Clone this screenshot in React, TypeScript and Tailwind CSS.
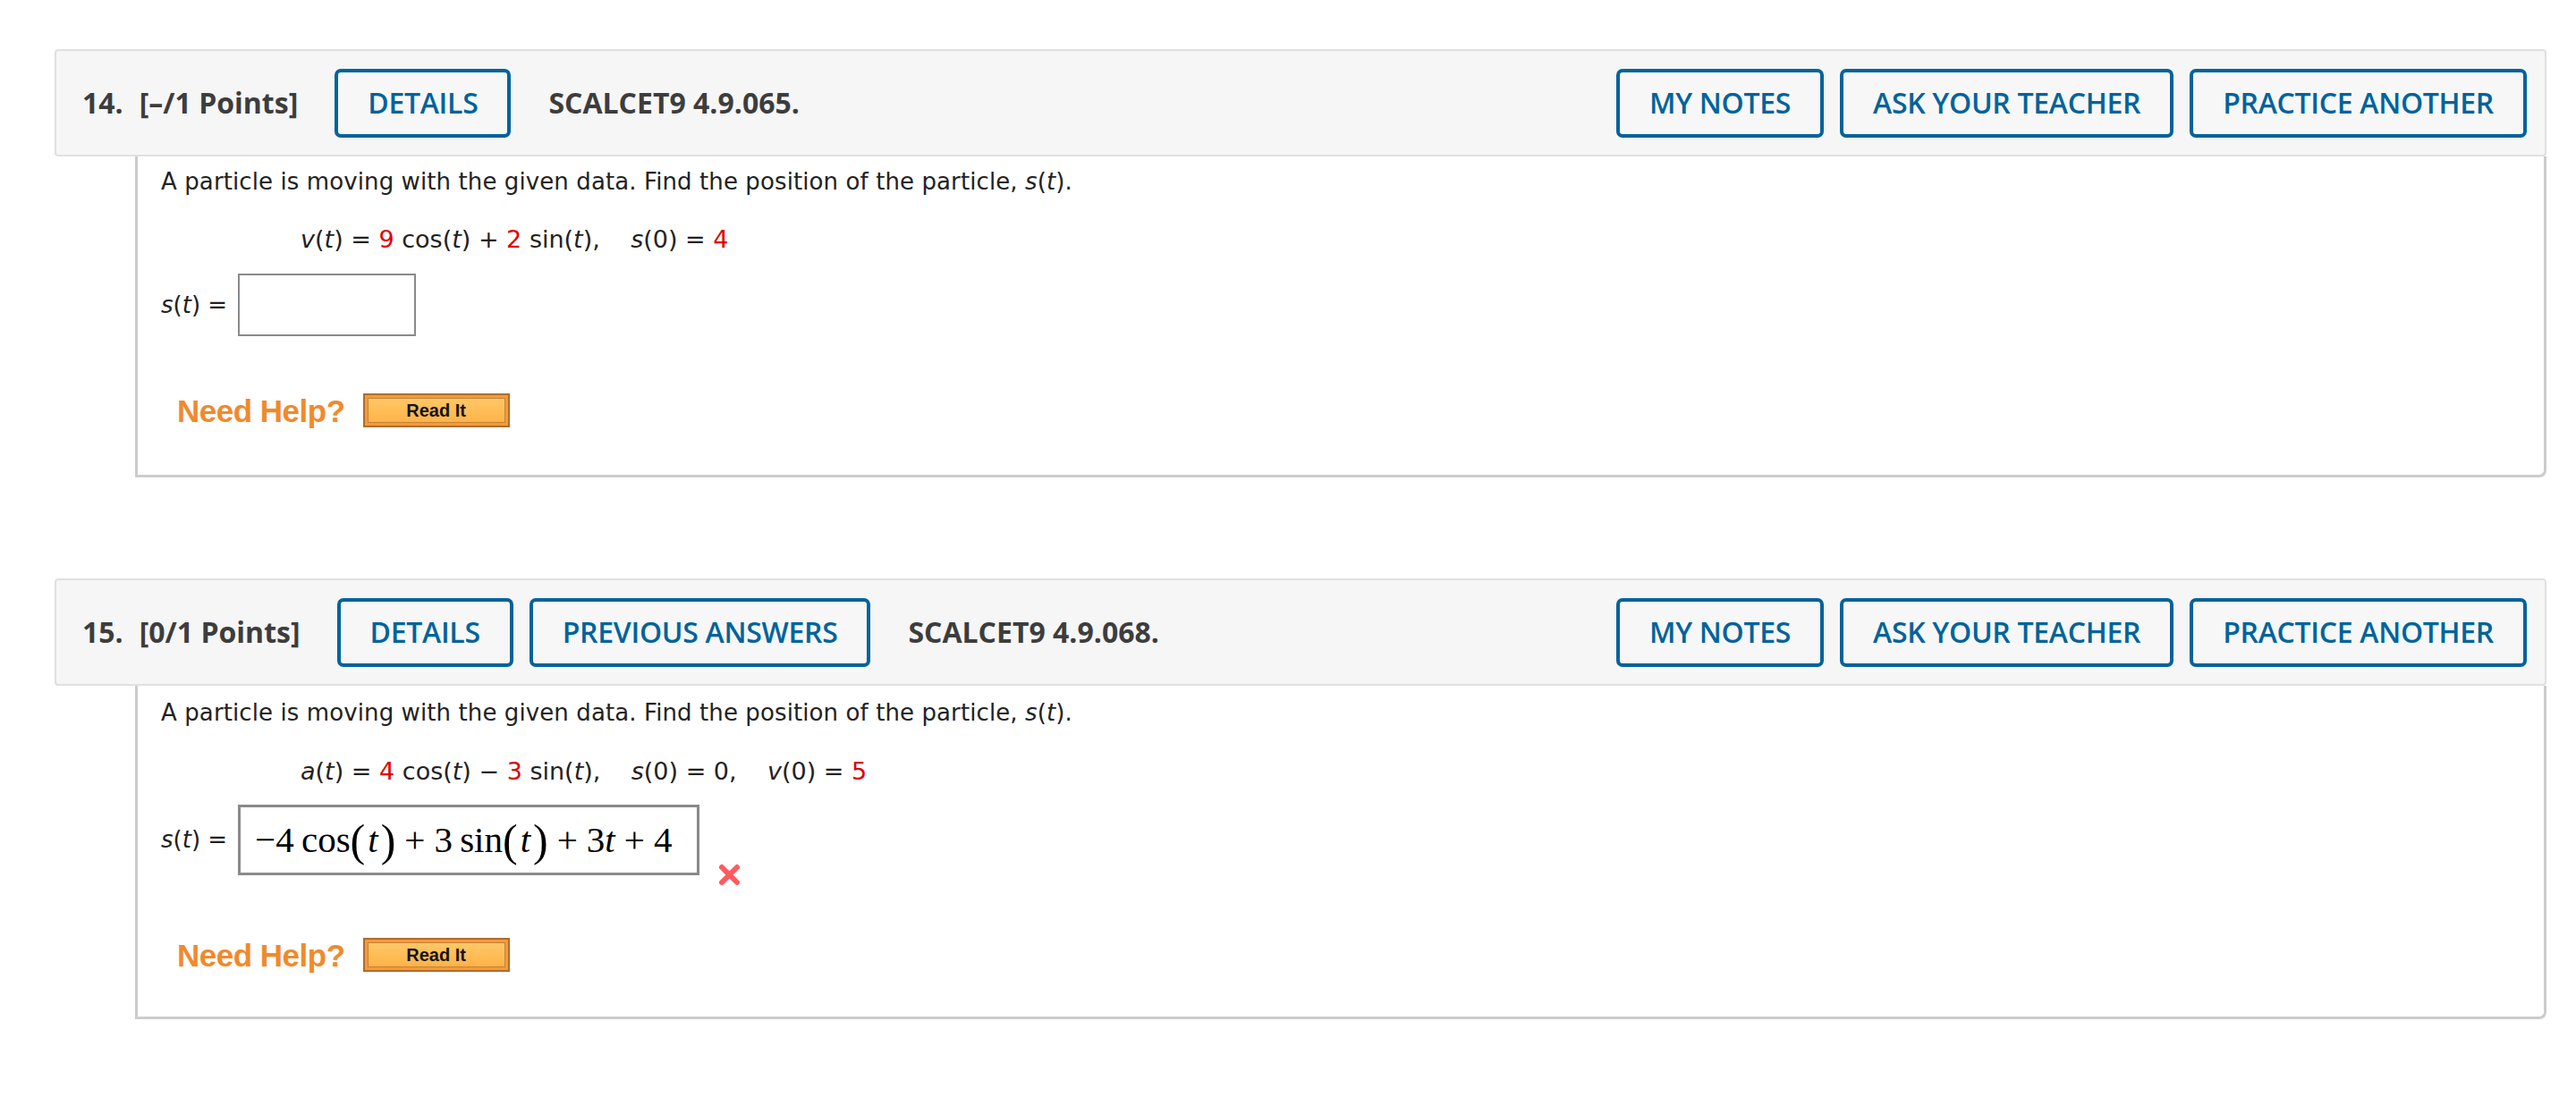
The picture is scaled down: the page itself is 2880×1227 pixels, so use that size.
import React from "react";

const headFont = { fontFamily: '"Open Sans", "Noto Sans", sans-serif' };
const bodyFont = { fontFamily: '"DejaVu Sans", Verdana, sans-serif' };
const mathFont = { fontFamily: '"Liberation Serif", "Times New Roman", serif' };
const helpFont = { fontFamily: '"Liberation Sans", Arial, sans-serif' };

function OutlineButton({ label }: { label: string }) {
  return (
    <button
      className="h-[77px] px-[33px] border-4 border-[#00639b] rounded-[7px] bg-[#f7f7f7] text-[#00639b] text-[32px] font-semibold leading-none tracking-[-0.3px] whitespace-nowrap"
      style={headFont}
    >
      {label}
    </button>
  );
}

function Header({
  num,
  points,
  code,
  previous,
}: {
  num: string;
  points: string;
  code: string;
  previous?: boolean;
}) {
  return (
    <div className="h-[120px] flex items-center border-2 border-[#e0e0e0] rounded-[4px] bg-[#f6f6f6] pl-[29px] pr-[20px]" style={headFont}>
      <span className="text-[32px] font-bold text-[#3d3d3d] whitespace-nowrap">
        {num}
        <span className="ml-[18px]">{points}</span>
      </span>
      <div className="ml-[41px] flex gap-[18px]">
        <OutlineButton label="DETAILS" />
        {previous && <OutlineButton label="PREVIOUS ANSWERS" />}
      </div>
      <span className="ml-[42px] text-[32px] font-bold text-[#3d3d3d] whitespace-nowrap">{code}</span>
      <div className="ml-auto flex gap-[18px]">
        <OutlineButton label="MY NOTES" />
        <OutlineButton label="ASK YOUR TEACHER" />
        <OutlineButton label="PRACTICE ANOTHER" />
      </div>
    </div>
  );
}

function Red({ children }: { children: React.ReactNode }) {
  return <span className="text-[#e00000]">{children}</span>;
}

function NeedHelp() {
  return (
    <div className="flex items-center gap-[20px] pl-[18px]">
      <span className="text-[35px] font-bold text-[#f08a2c] leading-none tracking-[-0.5px]" style={helpFont}>
        Need Help?
      </span>
      <div className="w-[164px] h-[38px] p-[3px] border-2 border-[#b06d2c] bg-[#f39a3c]">
        <div className="h-full flex items-center justify-center border border-[#c4833a] bg-gradient-to-b from-[#ffc766] to-[#ffb347]">
          <span className="text-[20px] font-bold text-[#141414] leading-none" style={helpFont}>
            Read It
          </span>
        </div>
      </div>
    </div>
  );
}

function Prompt() {
  return (
    <p className="text-[26px] leading-[33px] text-[#222] tracking-[0.1px]">
      A particle is moving with the given data. Find the position of the particle, <i>s</i>(<i>t</i>).
    </p>
  );
}

function Paren({ children }: { children: React.ReactNode }) {
  return (
    <span className="inline-flex items-center">
      <span className="text-[50px] leading-none">(</span>
      <i className="px-[3px]">{children}</i>
      <span className="text-[50px] leading-none">)</span>
    </span>
  );
}

function Op({ children }: { children: React.ReactNode }) {
  return <span className="mx-[10px]">{children}</span>;
}

export default function App() {
  return (
    <div className="min-h-screen bg-white pt-[55px] pl-[61px] pr-[33px]">
      {/* Question 14 */}
      <section>
        <Header num="14." points="[–/1 Points]" code="SCALCET9 4.9.065." />
        <div
          className="ml-[90px] border-x-[3px] border-b-[3px] border-[#cccccc] rounded-br-[8px] pl-[26px] pt-[12px] pb-[53px]"
          style={bodyFont}
        >
          <Prompt />
          <p className="mt-[31px] pl-[156px] text-[27px] leading-[33px] text-[#222] whitespace-pre">
            <i>v</i>(<i>t</i>) = <Red>9</Red> cos(<i>t</i>) + <Red>2</Red> sin(<i>t</i>),{"    "}<i>s</i>(0) = <Red>4</Red>
          </p>
          <div className="mt-[22px] flex items-center gap-[12px]">
            <span className="text-[26px] text-[#222]">
              <i>s</i>(<i>t</i>) =
            </span>
            <div className="w-[199px] h-[70px] border-2 border-[#8a8a8a] bg-white" />
          </div>
          <div className="mt-[64px]">
            <NeedHelp />
          </div>
        </div>
      </section>

      {/* Question 15 */}
      <section className="mt-[113px]">
        <Header num="15." points="[0/1 Points]" code="SCALCET9 4.9.068." previous />
        <div
          className="ml-[90px] border-x-[3px] border-b-[3px] border-[#cccccc] rounded-br-[8px] pl-[26px] pt-[14px] pb-[50px]"
          style={bodyFont}
        >
          <Prompt />
          <p className="mt-[32px] pl-[156px] text-[27px] leading-[33px] text-[#222] whitespace-pre">
            <i>a</i>(<i>t</i>) = <Red>4</Red> cos(<i>t</i>) − <Red>3</Red> sin(<i>t</i>),{"    "}<i>s</i>(0) = 0,{"    "}<i>v</i>(0) = <Red>5</Red>
          </p>
          <div className="mt-[21px] flex items-center gap-[12px]">
            <span className="text-[26px] text-[#222]">
              <i>s</i>(<i>t</i>) =
            </span>
            <div
              className="w-[516px] h-[79px] border-[3px] border-[#8a8a8a] bg-white flex items-center pl-[16px] text-[41px] text-black leading-none whitespace-nowrap"
              style={mathFont}
            >
              <span>−4&thinsp;cos</span>
              <Paren>t</Paren>
              <Op>+</Op>
              <span>3&thinsp;sin</span>
              <Paren>t</Paren>
              <Op>+</Op>
              <span>
                3<i>t</i>
              </span>
              <Op>+</Op>
              <span>4</span>
            </div>
            <svg className="self-end translate-y-[13px] ml-[8px]" width="27" height="27" viewBox="0 0 27 27">
              <path d="M5 5 L22 22 M22 5 L5 22" stroke="#ff5a5f" strokeWidth="6" strokeLinecap="round" />
            </svg>
          </div>
          <div className="mt-[70px]">
            <NeedHelp />
          </div>
        </div>
      </section>
    </div>
  );
}
